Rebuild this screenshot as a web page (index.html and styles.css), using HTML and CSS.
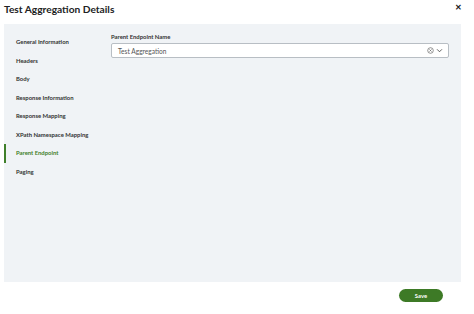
FILE: index.html
```html
<!DOCTYPE html>
<html>
<head>
<meta charset="utf-8">
<link rel="stylesheet" href="styles.css">
</head>
<body>
<div class="modal">
  <div class="header">
    <h1 class="title">Test Aggregation Details</h1>
    <span class="close">✕</span>
  </div>
  <div class="panel">
    <nav class="sidebar">
      <div class="nav-item">General Information</div>
      <div class="nav-item">Headers</div>
      <div class="nav-item">Body</div>
      <div class="nav-item">Response Information</div>
      <div class="nav-item">Response Mapping</div>
      <div class="nav-item">XPath Namespace Mapping</div>
      <div class="nav-item active">Parent Endpoint</div>
      <div class="nav-item">Paging</div>
    </nav>
    <div class="content">
      <label class="field-label">Parent Endpoint Name</label>
      <div class="select">
        <span class="select-value">Test Aggregation</span>
        <span class="select-icons">
          <svg class="clear" viewBox="0 0 10 10" width="7" height="7"><circle cx="5" cy="5" r="4" fill="none" stroke="#666" stroke-width="1"/><path d="M3.5 3.5 L6.5 6.5 M6.5 3.5 L3.5 6.5" stroke="#666" stroke-width="1"/></svg>
          <svg class="chev" viewBox="0 0 10 10" width="7" height="7"><path d="M1.5 3.3 L5 6.8 L8.5 3.3" fill="none" stroke="#444" stroke-width="1.2"/></svg>
        </span>
      </div>
    </div>
  </div>
  <div class="footer">
    <button class="save">Save</button>
  </div>
</div>
</body>
</html>
```
FILE: styles.css
```css
html, body {
  margin: 0;
  padding: 0;
  background: #ffffff;
}
body {
  font-family: "Lato", "Open Sans", sans-serif;
  color: #222;
}
.modal {
  width: 474px;
  height: 314px;
  display: flex;
  flex-direction: column;
}
.header {
  height: 24px;
  display: flex;
  align-items: flex-start;
  justify-content: space-between;
  padding: 0 12px 0 4px;
  box-sizing: border-box;
}
.title {
  margin: 3px 0 0 0;
  font-size: 10.2px;
  font-weight: 700;
  color: #222;
}
.close {
  font-size: 8px;
  font-weight: 700;
  margin-top: 2px;
  color: #222;
}
.panel {
  margin: 0 13px 0 4px;
  height: 258px;
  background: #f0f3f6;
  display: flex;
}
.sidebar {
  width: 107px;
  padding-top: 9px;
  display: flex;
  flex-direction: column;
}
.nav-item {
  height: 18.5px;
  line-height: 18.5px;
  font-size: 5.9px;
  font-weight: 700;
  color: #333;
  border-left: 2px solid transparent;
  box-sizing: border-box;
  padding-left: 10px;
}
.nav-item.active {
  color: #3f7f2a;
  border-left-color: #3f7f2a;
}
.content {
  flex: 1;
  padding: 9px 12px 0 0;
  display: flex;
  flex-direction: column;
}
.field-label {
  font-size: 5.9px;
  font-weight: 700;
  color: #333;
  margin-bottom: 3px;
}
.select {
  height: 15px;
  background: #fff;
  border: 1px solid #b8bec4;
  border-radius: 2px;
  box-sizing: border-box;
  display: flex;
  align-items: center;
  justify-content: space-between;
  padding: 0 5px 0 6px;
}
.select-value {
  font-size: 6.6px;
  color: #555;
}
.select-icons {
  display: flex;
  align-items: center;
  gap: 2px;
}
.footer {
  display: flex;
  justify-content: flex-end;
  padding: 7px 31px 0 0;
}
.save {
  width: 44px;
  height: 13px;
  border: none;
  border-radius: 7px;
  background: #3d7a26;
  color: #fff;
  font-family: "Lato", sans-serif;
  font-size: 5.9px;
  font-weight: 700;
  padding: 0;
}
```
